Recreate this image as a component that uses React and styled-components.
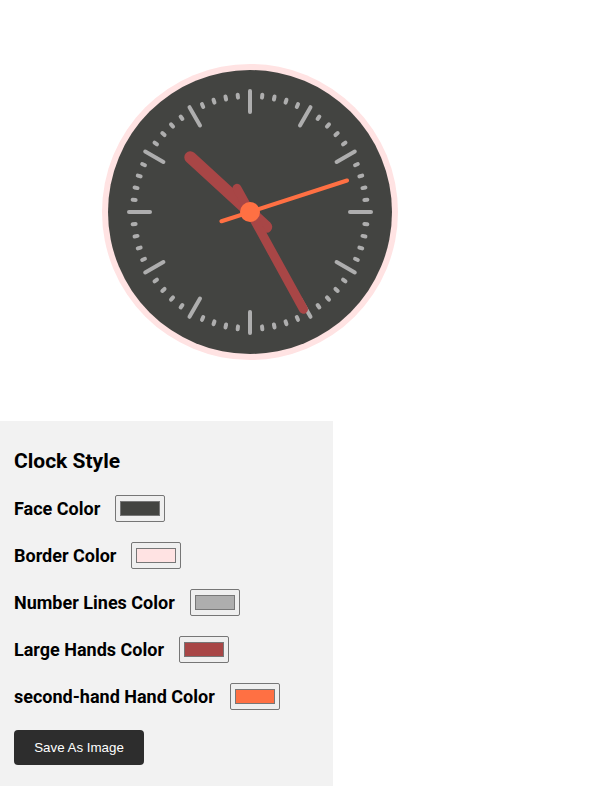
import React, { useState } from 'react'
import styled, { createGlobalStyle } from 'styled-components'

const GlobalStyle = createGlobalStyle`
    body {
        margin: 0;
        background: #ffffff;
        font-family: Roboto, 'Liberation Sans', sans-serif;
    }
`
const Page = styled.div`
    display: flex;
    flex-direction: column;
    align-items: flex-start;
`
const ClockArea = styled.div`
    width: 500px;
    height: 421px;
    display: flex;
    justify-content: center;
    padding-top: 62px;
    box-sizing: border-box;
`
const Panel = styled.div`
    width: 333px;
    background: #f2f2f2;
    padding: 27px 14px 21px 14px;
    box-sizing: border-box;
`
const Title = styled.h2`
    margin: 0 0 21px 0;
    font-size: 21px;
    line-height: 26px;
    font-weight: 700;
    color: #000;
`
const Row = styled.div`
    display: flex;
    align-items: center;
    gap: 15px;
    margin-bottom: 20px;
`
const Label = styled.label`
    font-size: 18px;
    line-height: 22px;
    font-weight: 700;
    color: #000;
`
const ColorInput = styled.input`
    width: 50px;
    height: 27px;
    margin: 0;
    padding: 1px 2px;
    border: 1px solid #767676;
    border-radius: 2px;
    background: #efefef;
    box-sizing: border-box;
`
const SaveButton = styled.button`
    width: 130px;
    height: 35px;
    border: none;
    border-radius: 4px;
    background: #2d2d2d;
    color: #fff;
    font-family: 'Liberation Sans', Arial, sans-serif;
    font-size: 13.33px;
    cursor: pointer;
`

const C = 150

function polar(r, deg) {
    const a = (deg - 90) * Math.PI / 180
    return [C + r * Math.cos(a), C + r * Math.sin(a)]
}

function Hand({ angle, len, tail, width, color, cap = 'round' }) {
    const [x1, y1] = polar(tail, angle + 180)
    const [x2, y2] = polar(len, angle)
    return <line x1={x1} y1={y1} x2={x2} y2={y2} stroke={color} strokeWidth={width} strokeLinecap={cap} />
}

function Clock({ colors, time }) {
    const ticks = []
    for (let i = 0; i < 60; i++) {
        const deg = i * 6
        const big = i % 5 === 0
        const [x1, y1] = polar(big ? 100 : 115, deg)
        const [x2, y2] = polar(big ? 121 : 118, deg)
        ticks.push(
            <line key={i} x1={x1} y1={y1} x2={x2} y2={y2}
                stroke={colors.lines} strokeWidth={4}
                strokeLinecap="round" />
        )
    }
    const { h, m, s } = time
    const secAngle = s * 6
    const minAngle = m * 6 + s * 0.1
    const hourAngle = (h % 12) * 30 + m * 0.5
    return (
        <svg width="300" height="300" viewBox="0 0 300 300">
            <circle cx={C} cy={C} r={148} fill={colors.border} />
            <circle cx={C} cy={C} r={142} fill={colors.face} />
            {ticks}
            <Hand angle={hourAngle} len={81} tail={22} width={12} color={colors.hands} />
            <Hand angle={minAngle} len={111} tail={27} width={9} color={colors.hands} />
            <Hand angle={secAngle} len={102} tail={30} width={4} color={colors.second} />
            <circle cx={C} cy={C} r={10} fill={colors.second} />
        </svg>
    )
}

const fields = [
    ['face', 'Face Color'],
    ['border', 'Border Color'],
    ['lines', 'Number Lines Color'],
    ['hands', 'Large Hands Color'],
    ['second', 'second-hand Hand Color'],
]

export default function App() {
    const [colors, setColors] = useState({
        face: '#434441',
        border: '#ffe3e3',
        lines: '#aeaeae',
        hands: '#a84646',
        second: '#ff7043',
    })
    const time = { h: 10, m: 25, s: 12 }

    return (
        <Page>
            <GlobalStyle />
            <ClockArea>
                <Clock colors={colors} time={time} />
            </ClockArea>
            <Panel>
                <Title>Clock Style</Title>
                {fields.map(([key, text]) => (
                    <Row key={key}>
                        <Label htmlFor={key}>{text}</Label>
                        <ColorInput id={key} type="color" value={colors[key]}
                            onChange={e => setColors({ ...colors, [key]: e.target.value })} />
                    </Row>
                ))}
                <SaveButton>Save As Image</SaveButton>
            </Panel>
        </Page>
    )
}
